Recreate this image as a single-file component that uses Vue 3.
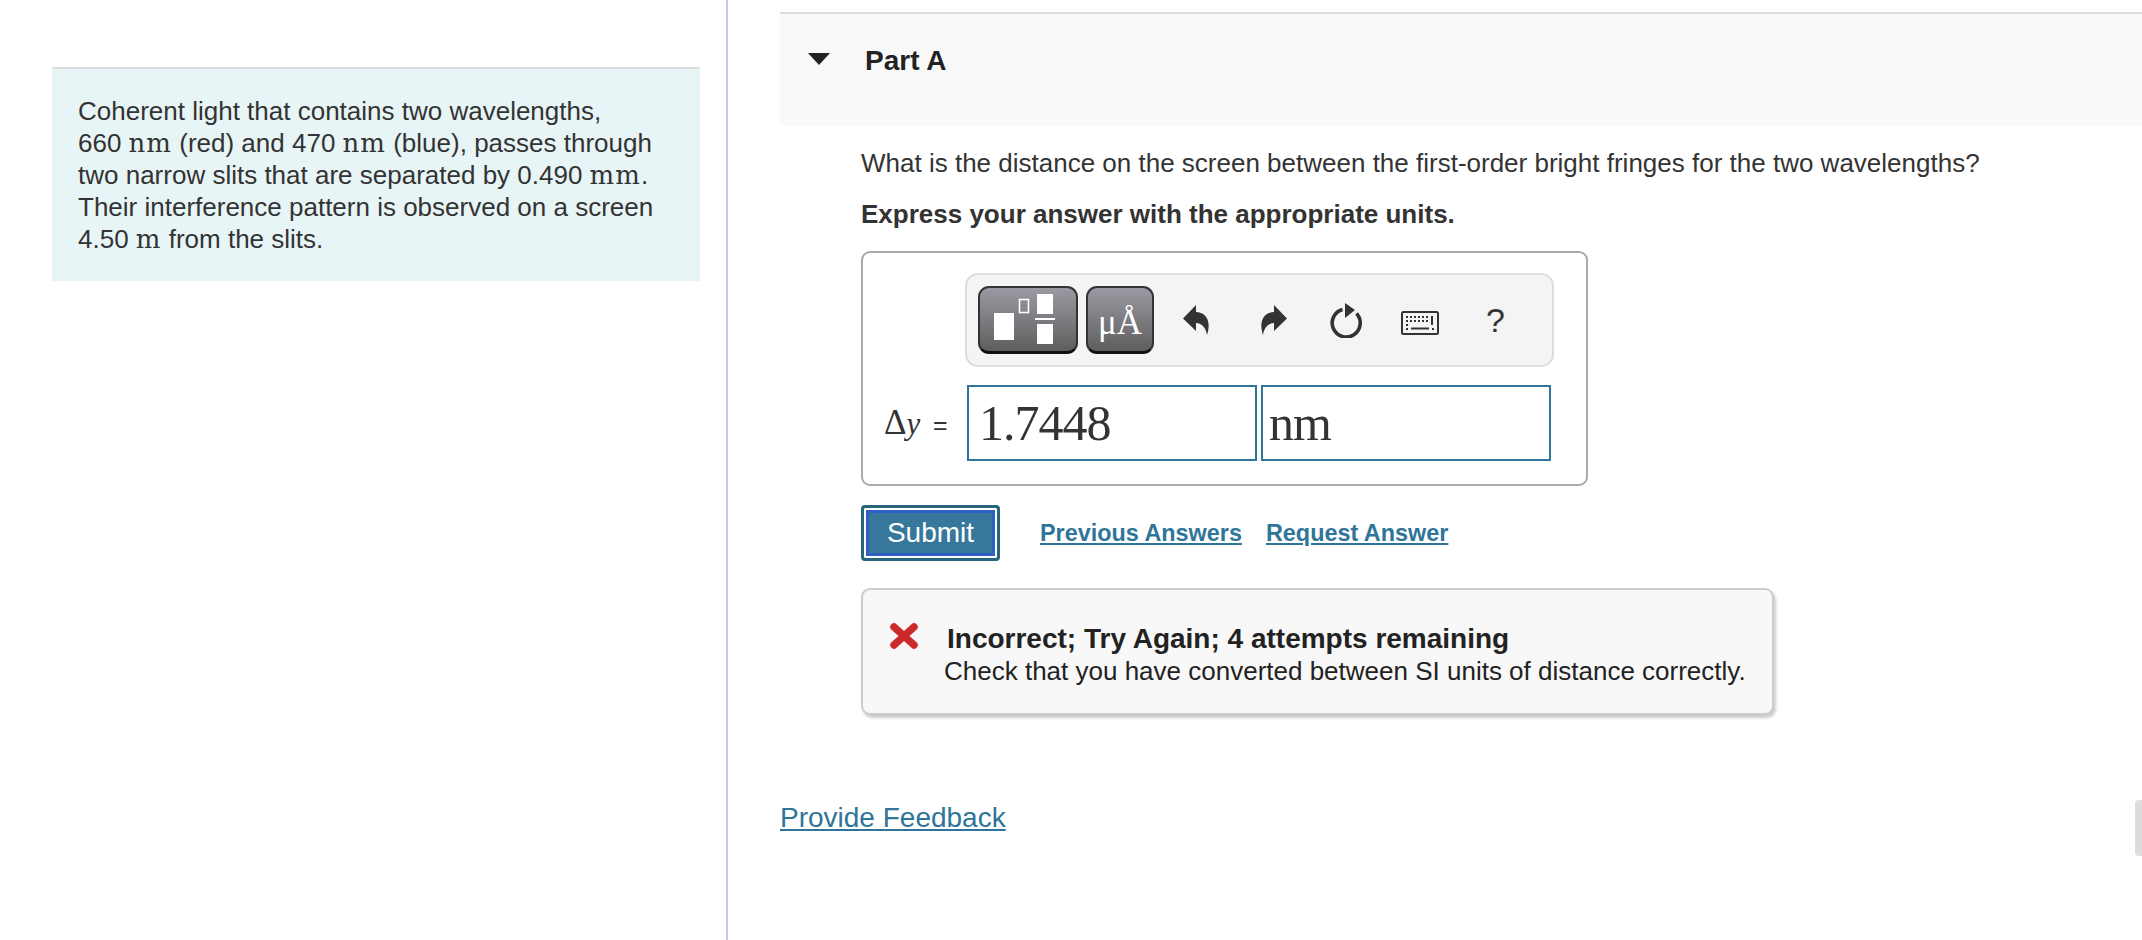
<template>
  <div class="page">
    <aside class="left">
      <div class="intro">
        Coherent light that contains two wavelengths,<br />
        660 <span class="unit">nm</span> (red) and 470 <span class="unit">nm</span> (blue), passes through<br />
        two narrow slits that are separated by 0.490 <span class="unit">mm</span>.<br />
        Their interference pattern is observed on a screen<br />
        4.50 <span class="unit">m</span> from the slits.
      </div>
    </aside>

    <main class="right">
      <div class="part-head">
        <span class="caret"></span>
        <h2>Part A</h2>
      </div>

      <div class="part-body">
        <p class="question">What is the distance on the screen between the first-order bright fringes for the two wavelengths?</p>
        <p class="hint">Express your answer with the appropriate units.</p>

        <div class="answer-box">
          <div class="toolbar">
            <button class="tpl tpl-wide">
              <svg width="100" height="68" viewBox="0 0 100 68">
                <rect x="16" y="27" width="20" height="27" fill="#fff" />
                <rect x="41.500" y="13.500" width="9" height="13" fill="none" stroke="#fff" stroke-width="1.600" />
                <rect x="59" y="8" width="16" height="20" fill="#fff" />
                <rect x="57" y="32" width="20" height="2" fill="#fff" />
                <rect x="59" y="38" width="16" height="20" fill="#fff" />
              </svg>
            </button>
            <button class="tpl tpl-unit">μÅ</button>

            <svg class="tool undo" width="27" height="30" viewBox="0 0 27 30">
              <path d="M0 13.500 13 0v7c9 0 16 8 11 23-1-7-5-12-11-12v8z" fill="#333" />
            </svg>
            <svg class="tool redo" width="27" height="30" viewBox="0 0 27 30">
              <path d="M27 13.500 14 0v7C5 7-2 15 3 30c1-7 5-12 11-12v8z" fill="#333" />
            </svg>
            <svg class="tool reload" width="32" height="35" viewBox="0 0 32 35">
              <path d="M26.500 10.500A14 14 0 1 1 12.500 6.500" fill="none" stroke="#333" stroke-width="3.600" />
              <path d="M15 0l10 7-10 8z" fill="#333" />
            </svg>
            <svg class="tool keyboard" width="38" height="24" viewBox="0 0 38 24">
              <rect x="1" y="1" width="36" height="22" rx="1.500" fill="#f4f4f4" stroke="#333" stroke-width="2" />
              <g fill="#333">
                <rect v-for="k in keyDots" :key="k.x + '-' + k.y" :x="k.x" :y="k.y" width="2" height="2" />
                <rect x="10" y="16.500" width="18" height="2" />
                <rect x="30" y="5" width="2" height="9" />
              </g>
            </svg>
            <span class="tool help">?</span>
          </div>

          <div class="answer-row">
            <span class="label"><span class="delta">Δ</span><i>y</i> <span class="eq">=</span></span>
            <div class="field value">1.7448</div>
            <div class="field">nm</div>
          </div>
        </div>

        <div class="actions">
          <button class="submit">Submit</button>
          <a class="action-link" href="#">Previous Answers</a>
          <a class="action-link" href="#">Request Answer</a>
        </div>

        <div class="feedback">
          <svg class="cross" width="28" height="26" viewBox="0 0 28 26">
            <path d="M4 4l20 18M24 4 4 22" stroke="#cc2a2a" stroke-width="7.500" stroke-linecap="round" fill="none" />
          </svg>
          <div class="feedback-text">
            <div class="feedback-title">Incorrect; Try Again; 4 attempts remaining</div>
            <div class="feedback-msg">Check that you have converted between SI units of distance correctly.</div>
          </div>
        </div>
      </div>

      <a class="provide" href="#">Provide Feedback</a>
    </main>

    <div class="scroll-handle"></div>
  </div>
</template>

<script setup>
// small squares of the on-screen keyboard icon
const keyDots = []
for (const y of [5, 9]) {
  for (let x = 5; x < 28; x += 4) keyDots.push({ x, y })
}
keyDots.push({ x: 5, y: 13 }, { x: 5, y: 17 }, { x: 31, y: 17 })
</script>

<style>
html, body {
  margin: 0;
  background: #fff;
  overflow: hidden;
}
</style>

<style scoped>
.page {
  display: flex;
  height: 940px;
  font-family: "Liberation Sans", Arial, sans-serif;
  color: #333;
  background: #fff;
}

.left {
  box-sizing: border-box;
  width: 728px;
  flex: none;
  padding: 67px 26px 0 52px;
  border-right: 2px solid #c0cbe0;
}

.intro {
  padding: 26px 0 26px 26px;
  background: #e8f5f6;
  border-top: 2px solid #ddd;
  font-size: 26px;
  line-height: 32px;
  white-space: nowrap;
}

.unit {
  font-family: "DejaVu Serif", serif;
  font-size: 26px;
  letter-spacing: 1px;
  line-height: 1;
}

.right {
  flex: 1;
  min-width: 0;
  padding: 12px 0 0 52px;
}

.part-head {
  box-sizing: border-box;
  display: flex;
  align-items: flex-start;
  height: 114px;
  padding: 41px 0 0 28px;
  background: #f9f9f9;
  border-top: 2px solid #ddd;
}

.caret {
  width: 0;
  height: 0;
  margin-top: -2px;
  border-left: 11px solid transparent;
  border-right: 11px solid transparent;
  border-top: 12px solid #222;
}

.part-head h2 {
  margin: -10px 0 0 35px;
  font-size: 28px;
  line-height: 32px;
  font-weight: bold;
  color: #222;
}

.part-body {
  padding: 21px 0 0 81px;
}

.question,
.hint {
  margin: 0 0 19px;
  font-size: 26px;
  line-height: 32px;
}

.hint {
  margin-bottom: 21px;
  font-weight: bold;
}

.answer-box {
  box-sizing: border-box;
  width: 727px;
  height: 235px;
  padding: 20px 0 0 102px;
  border: 2px solid #aaa;
  border-radius: 9px;
}

.toolbar {
  box-sizing: border-box;
  display: flex;
  align-items: center;
  width: 589px;
  height: 94px;
  padding-left: 11px;
  background: #f4f4f4;
  border: 2px solid #ddd;
  border-radius: 13px;
}

.tpl {
  box-sizing: border-box;
  height: 68px;
  padding: 0;
  border: 2px solid #333;
  border-bottom: 3px solid #111;
  border-radius: 11px;
  background: linear-gradient(#9b9aa3, #5e5e5e);
  color: #fff;
}

.tpl svg {
  display: block;
  margin: -2px 0 0 -2px;
}

.tpl-wide {
  width: 100px;
}

.tpl-unit {
  width: 68px;
  margin-left: 8px;
  font-family: "Liberation Serif", serif;
  font-size: 35px;
  line-height: 1;
  padding-top: 6px;
}

.tool {
  flex: none;
  display: block;
}

.undo {
  margin: 0 0 0 29px;
}

.redo {
  margin-left: 50px;
}

.reload {
  margin-left: 43px;
}

.keyboard {
  margin: 6px 0 0 39px;
}

.help {
  margin-left: 47px;
  font-size: 34px;
  line-height: 1;
  color: #333;
}

.answer-row {
  display: flex;
  align-items: center;
  margin: 18px 0 0 -102px;
}

.label {
  box-sizing: border-box;
  width: 104px;
  padding-left: 21px;
  font-family: "Liberation Serif", serif;
  font-size: 31px;
  white-space: nowrap;
}

.delta {
  font-size: 35px;
}

.label i {
  margin-right: 5px;
}

.eq {
  font-family: "Liberation Sans", sans-serif;
  font-size: 25px;
}

.field {
  box-sizing: border-box;
  width: 290px;
  height: 76px;
  margin-right: 4px;
  padding: 0 0 0 6px;
  border: 2px solid #2f7599;
  font-family: "Liberation Serif", serif;
  font-size: 50px;
  letter-spacing: -1px;
  line-height: 72px;
}

.field.value {
  padding-left: 10px;
}

.actions {
  display: flex;
  align-items: center;
  margin-top: 19px;
}

.submit {
  box-sizing: border-box;
  width: 139px;
  height: 56px;
  padding: 0;
  border: 3px solid #27657b;
  border-radius: 4px;
  background: #36779b;
  box-shadow: inset 0 0 0 2px #fff, inset 0 0 0 5px #2d5fc4;
  color: #fff;
  font-family: inherit;
  font-size: 28px;
}

.action-link {
  margin-left: 40px;
  font-size: 23.400px;
  font-weight: bold;
  color: #2f7599;
}

.action-link + .action-link {
  margin-left: 24px;
}

.feedback {
  box-sizing: border-box;
  position: relative;
  width: 913px;
  height: 127px;
  margin-top: 27px;
  padding: 32px 0 0 84px;
  background: #f8f8f8;
  border: 2px solid #ccc;
  border-radius: 9px;
  box-shadow: 2px 3px 3px #ccc;
  color: #222;
}

.cross {
  position: absolute;
  left: 27px;
  top: 33px;
}

.feedback-title {
  font-size: 28px;
  line-height: 33px;
  font-weight: bold;
}

.feedback-msg {
  margin-left: -3px;
  font-size: 26px;
  line-height: 32px;
}

.provide {
  display: inline-block;
  margin-top: 87px;
  font-size: 28px;
  line-height: 32px;
  color: #2f7599;
}

.scroll-handle {
  position: absolute;
  right: 0;
  top: 800px;
  width: 7px;
  height: 56px;
  background: #dcdcdc;
  border-radius: 4px 0 0 4px;
}
</style>
